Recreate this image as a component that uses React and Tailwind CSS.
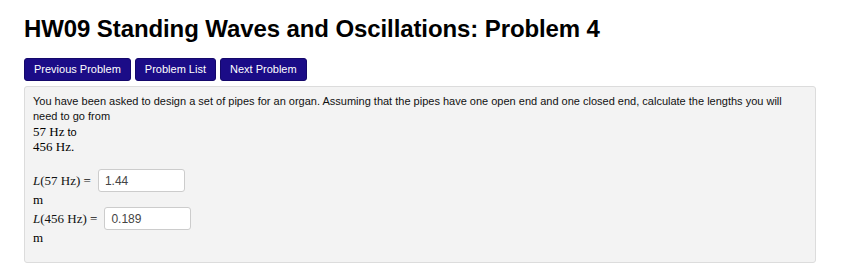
import React from 'react';

function NavButton({ children }) {
  return (
    <button className="h-[23px] px-[9px] rounded-[3px] bg-[#1b0c87] text-white text-[11px] leading-none border border-[#14086a]">
      {children}
    </button>
  );
}

function Answer({ label, value }) {
  return (
    <>
      <div className="flex items-center h-[23px]">
        <span className="font-['Liberation_Serif',serif] text-[13px] text-[#111]">
          <i>L</i>({label}) =
        </span>
        <input
          readOnly
          value={value}
          className="w-[87px] h-[23px] ml-[7px] px-[6px] bg-white border border-[#ccc] rounded-[3px] text-[12px] text-[#444] outline-none"
        />
      </div>
      <div className="font-['Liberation_Serif',serif] text-[13px] leading-[15px]">m</div>
    </>
  );
}

export default function App() {
  return (
    <div className="w-[864px] h-[275px] bg-white pl-[24px] pt-[16px] font-['Liberation_Sans',Arial,sans-serif] text-black">
      <h1 className="text-[24px] font-bold leading-[26px] tracking-[-0.1px]">
        HW09 Standing Waves and Oscillations: Problem 4
      </h1>

      <div className="flex gap-[4px] mt-[16px]">
        <NavButton>Previous Problem</NavButton>
        <NavButton>Problem List</NavButton>
        <NavButton>Next Problem</NavButton>
      </div>

      <div className="w-[792px] h-[177px] mt-[5px] bg-[#f3f3f3] border border-[#dcdcdc] rounded-[3px] px-[8px] pt-[7px]">
        <p className="text-[11px] leading-[15px] text-[#111] pr-[20px]">
          You have been asked to design a set of pipes for an organ. Assuming that the pipes have one open end and one closed end, calculate the lengths you will need to go from
        </p>
        <div className="text-[11px] leading-[15px]">
          <span className="font-['Liberation_Serif',serif] text-[13px]">57 Hz</span> to
        </div>
        <div className="font-['Liberation_Serif',serif] text-[13px] leading-[14px]">456 Hz.</div>

        <div className="mt-[15px]">
          <Answer label="57 Hz" value="1.44" />
          <Answer label="456 Hz" value="0.189" />
        </div>
      </div>
    </div>
  );
}
